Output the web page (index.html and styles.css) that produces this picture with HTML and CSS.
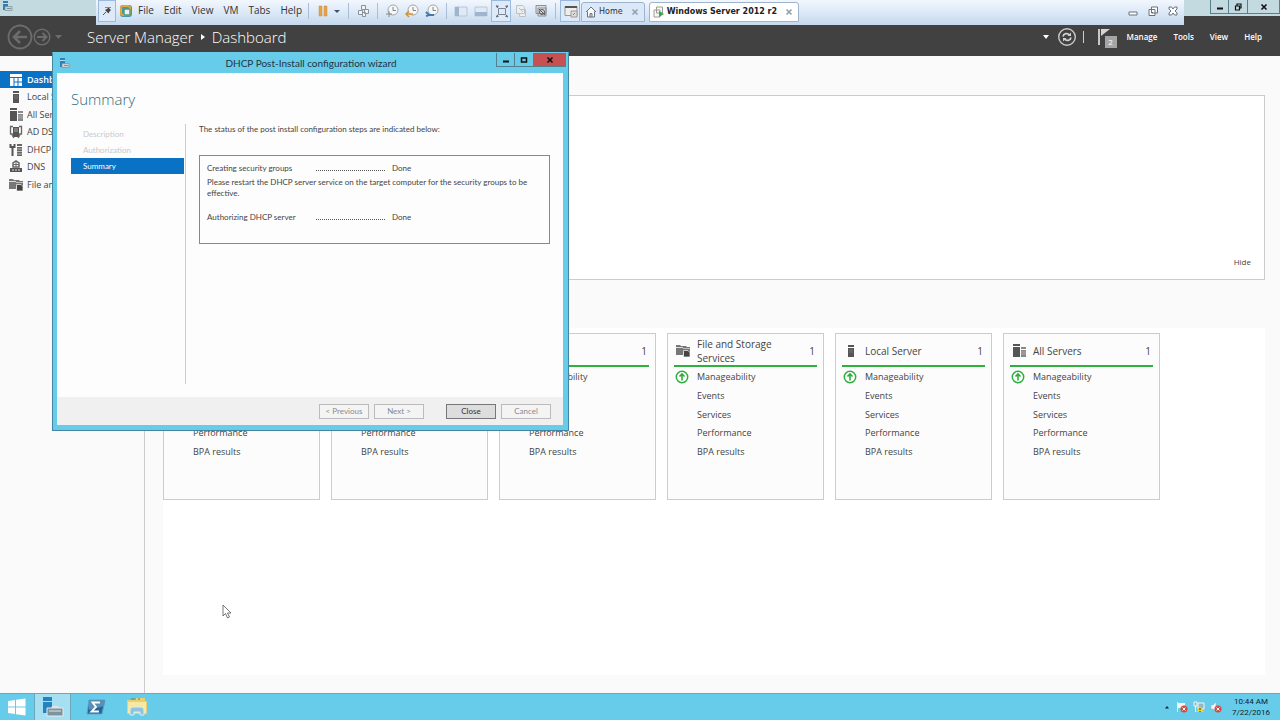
FILE: index.html
```html
<!DOCTYPE html>
<html lang="en">
<head>
<meta charset="utf-8">
<title>Server Manager</title>
<link rel="stylesheet" href="styles.css">
</head>
<body>
<svg class="defs" aria-hidden="true">
  <defs>
    <symbol id="server" viewBox="0 0 14 14"><path d="M4 1h6v2H4zM4 4h6v9H4z" fill="#555"/><path d="M5 6h4M5 8h4" stroke="#777"/></symbol>
    <symbol id="servers" viewBox="0 0 14 14"><path d="M1 0h7v2H1zM1 3h7v10H1z" fill="#555"/><path d="M9 3h5v2H9zM9 6h5v7H9z" fill="#888"/><path d="M9 8h5M9 10h5" stroke="#aaa"/></symbol>
    <symbol id="adds" viewBox="0 0 14 14"><path d="M4 2h6v10H4z" fill="#555"/><path d="M5 4h4M5 6h4" stroke="#aaa"/><path d="M4 1.500H1.500V9H4M10 1.500h2.500V9H10M3 10l2 3M11 10l-2 3" fill="none" stroke="#666" stroke-width="1.300"/></symbol>
    <symbol id="dhcp" viewBox="0 0 14 14"><path d="M3.500 4v9M1.500 1v3h4V1" fill="none" stroke="#555" stroke-width="2"/><path d="M8 1h5v2H8zM8 4h5v9H8z" fill="#666"/><path d="M8 6h5M8 8.500h5M8 11h5" stroke="#bbb"/></symbol>
    <symbol id="dns" viewBox="0 0 14 14"><path d="M4 7V3l3-2 3 2v4z" fill="none" stroke="#666" stroke-width="1.500"/><path d="M7 2v5M4 4.500h6" stroke="#666"/><path d="M1 8h12v4H1z" fill="#555"/><path d="M3 10h2M6 10h2M9 10h2" stroke="#ddd"/></symbol>
    <symbol id="files" viewBox="0 0 14 14"><path d="M0 1h4l1 1h2v9H0z" fill="#777"/><path d="M0 3.500h7" stroke="#ddd"/><path d="M7 2h3l1 1h3v5H7z" fill="#777"/><path d="M7 4.500h7" stroke="#ddd" stroke-width=".7"/><path d="M7.500 6.500H12l2 2V13H7.500z" fill="#444" stroke="#fafafa" stroke-width=".7"/></symbol>
    <symbol id="up" viewBox="0 0 14 14"><circle cx="7" cy="7" r="5.700" fill="#fff" stroke="#2dae3c" stroke-width="1.500"/><path d="M7 10.500V4M4.500 6.500L7 4l2.500 2.500" fill="none" stroke="#2dae3c" stroke-width="1.600"/></symbol>
    <symbol id="app" viewBox="0 0 12 12"><path d="M2 1h5v9H2z" fill="#2c80b8"/><path d="M2 3.500h5" stroke="#b9dcec"/><path d="M4 6.500h7v4H4z" fill="#c9d3d8" stroke="#7d8f98" stroke-width=".7"/><path d="M6 8.500h4" stroke="#7d8f98"/></symbol>
    <symbol id="min" viewBox="0 0 12 12"><path d="M3 7.500h6" stroke="currentColor" stroke-width="2"/></symbol>
    <symbol id="max" viewBox="0 0 12 12"><path d="M3.500 4h5v4h-5z" fill="none" stroke="currentColor" stroke-width="1.500"/></symbol>
    <symbol id="restore" viewBox="0 0 12 12"><path d="M3.500 5h4v4h-4zM5 5V3h4v4H8" fill="none" stroke="currentColor" stroke-width="1.200"/></symbol>
    <symbol id="x" viewBox="0 0 12 12"><path d="M3.500 3.500l5 5M8.500 3.500l-5 5" stroke="currentColor" stroke-width="1.600"/></symbol>
    <symbol id="clock" viewBox="0 0 20 20"><circle cx="11" cy="9" r="5" fill="#f7f7f5" stroke="#a4a7ac"/><path d="M11 6v3.500h3" fill="none" stroke="#7f858d"/></symbol>
  </defs>
</svg>

<div class="titlebar">
  <svg class="ic12"><use href="#app"/></svg>
  <div class="winctl">
    <button aria-label="Minimize"><svg class="ic12"><use href="#min"/></svg></button>
    <button aria-label="Restore"><svg class="ic12"><use href="#restore"/></svg></button>
    <button class="wide" aria-label="Close"><svg class="ic12"><use href="#x"/></svg></button>
  </div>
</div>

<header class="header">
  <div class="history">
    <button aria-label="Back"><svg width="26" height="26" viewBox="0 0 26 26"><circle cx="13" cy="13" r="11.500" fill="none" stroke="#6c6c6c" stroke-width="1.800"/><path d="M20 13H8M13 7l-6 6 6 6" fill="none" stroke="#6c6c6c" stroke-width="2.600"/></svg></button>
    <button aria-label="Forward"><svg width="18" height="18" viewBox="0 0 18 18"><circle cx="9" cy="9" r="7.800" fill="none" stroke="#6c6c6c" stroke-width="1.500"/><path d="M4 9h9M9.500 5l4 4-4 4" fill="none" stroke="#6c6c6c" stroke-width="2"/></svg></button>
    <svg width="14" height="8" viewBox="0 0 14 8"><path d="M4 2h7L7.500 6z" fill="#6c6c6c"/></svg>
  </div>
  <h1 class="crumbs"><span>Server Manager</span><svg width="6" height="8" viewBox="0 0 6 8"><path d="M1 1l4 3-4 3z" fill="#fff"/></svg><span>Dashboard</span></h1>
  <nav class="actions">
    <svg width="6" height="6" viewBox="0 0 6 6"><path d="M0 1h6L3 5z" fill="#fff"/></svg>
    <button aria-label="Refresh"><svg width="20" height="20" viewBox="0 0 20 20"><circle cx="10" cy="10" r="8.300" fill="none" stroke="#c8c8c8" stroke-width="1.400"/><path d="M6 9.500c.5-3 4.500-4 6.500-1.500M14 10.500c-.5 3-4.500 4-6.500 1.500" fill="none" stroke="#d0d0d0" stroke-width="1.700"/><path d="M14 5.500V9h-3.500zM6 14.500V11h3.500z" fill="#d0d0d0"/></svg></button>
    <span class="bar"></span>
    <button class="flag" aria-label="Notifications"><svg width="14" height="18" viewBox="0 0 14 18"><path d="M2 1v16" stroke="#c8c8c8" stroke-width="2"/><path d="M4 1h9L4 8z" fill="#d4d4d4"/></svg><span class="badge">2</span></button>
    <button class="menu">Manage</button><button class="menu">Tools</button><button class="menu">View</button><button class="menu">Help</button>
  </nav>
</header>

<div class="main">
  <nav class="sidebar">
    <div class="links">
      <a class="on" href="#"><svg class="ic14" viewBox="0 0 14 14"><path d="M1 1h12v12H1z" fill="#fff"/><path d="M1 4.500h12M5 5v8M9 5v8M5 9h8" stroke="#0a72c4"/></svg>Dashboard</a>
      <a href="#"><svg class="ic14"><use href="#server"/></svg>Local Server</a>
      <a href="#"><svg class="ic14"><use href="#servers"/></svg>All Servers</a>
      <a href="#"><svg class="ic14"><use href="#adds"/></svg>AD DS</a>
      <a href="#"><svg class="ic14"><use href="#dhcp"/></svg>DHCP</a>
      <a href="#"><svg class="ic14"><use href="#dns"/></svg>DNS</a>
      <a href="#"><svg class="ic14"><use href="#files"/></svg>File and Storage Services</a>
    </div>
  </nav>
  <main class="content">
    <section class="welcome"><button>Hide</button></section>
    <section class="groups">
      <article class="tile"><header><svg class="ic14"><use href="#adds"/></svg><h2>AD DS</h2><b>1</b></header><ul><li class="ok"><svg class="ic14"><use href="#up"/></svg>Manageability</li><li>Events</li><li>Services</li><li>Performance</li><li>BPA results</li></ul></article>
      <article class="tile"><header><svg class="ic14"><use href="#dhcp"/></svg><h2>DHCP</h2><b>1</b></header><ul><li class="ok"><svg class="ic14"><use href="#up"/></svg>Manageability</li><li>Events</li><li>Services</li><li>Performance</li><li>BPA results</li></ul></article>
      <article class="tile"><header><svg class="ic14"><use href="#dns"/></svg><h2>DNS</h2><b>1</b></header><ul><li class="ok"><svg class="ic14"><use href="#up"/></svg>Manageability</li><li>Events</li><li>Services</li><li>Performance</li><li>BPA results</li></ul></article>
      <article class="tile"><header><svg class="ic14"><use href="#files"/></svg><h2>File and Storage Services</h2><b>1</b></header><ul><li class="ok"><svg class="ic14"><use href="#up"/></svg>Manageability</li><li>Events</li><li>Services</li><li>Performance</li><li>BPA results</li></ul></article>
      <article class="tile"><header><svg class="ic14"><use href="#server"/></svg><h2>Local Server</h2><b>1</b></header><ul><li class="ok"><svg class="ic14"><use href="#up"/></svg>Manageability</li><li>Events</li><li>Services</li><li>Performance</li><li>BPA results</li></ul></article>
      <article class="tile"><header><svg class="ic14"><use href="#servers"/></svg><h2>All Servers</h2><b>1</b></header><ul><li class="ok"><svg class="ic14"><use href="#up"/></svg>Manageability</li><li>Events</li><li>Services</li><li>Performance</li><li>BPA results</li></ul></article>
    </section>
  </main>
</div>

<footer class="taskbar">
  <button class="start" aria-label="Start"><svg width="18" height="18" viewBox="0 0 18 18"><path d="M0 3l7-1v6.500H0zM8 1.800L17.500.5v8H8zM0 9.500h7V16l-7-1zM8 9.500h9.500v8L8 16.200z" fill="#fff"/></svg></button>
  <button class="running" aria-label="Server Manager"><svg width="22" height="22" viewBox="0 0 22 22"><path d="M1 1h9v16H1z" fill="#2482bd"/><path d="M1 5.500h9" stroke="#a9dcf0"/><path d="M5 12h16v8H5z" fill="#7e929c" stroke="#e3eef2"/><path d="M10 12v-1.500h6V12M7 15h12" fill="none" stroke="#dde7eb"/></svg></button>
  <button aria-label="PowerShell"><svg width="20" height="18" viewBox="0 0 20 18"><path d="M3 2h16l-3 14H1z" fill="#24659b" stroke="#5fa5cc"/><path d="M3 2h16l-1 6-15 4z" fill="#5890b8"/><path d="M13 5.500V4.500H6.500L10 9l-4.500 4.500H12v-1" fill="none" stroke="#fff" stroke-width="1.800"/></svg></button>
  <button aria-label="File Explorer"><svg width="22" height="20" viewBox="0 0 22 20"><path d="M1 3h7l1-2h10v3h2v13H1z" fill="#e9cf72"/><path d="M2 5h18v11H2z" fill="#f8e9a2"/><path d="M5 2h5M12 2h2" stroke="#4f8b63"/><path d="M4 18v-5c0-2 2-3 4-3h6c2 0 4 1 4 3v5h-4v-3H8v3z" fill="#8fc4df" stroke="#d5edf5"/></svg></button>
  <div class="tray">
    <svg width="8" height="6" viewBox="0 0 8 6"><path d="M2 4.500h4L4 2z" fill="#123"/></svg>
    <svg width="12" height="12" viewBox="0 0 12 12"><path d="M1.500 1v10" stroke="#eee"/><path d="M2 2h7v5H2z" fill="#f4f4f4"/><circle cx="8" cy="8" r="3.500" fill="#d24a3d"/><path d="M6.500 6.500l3 3M9.500 6.500l-3 3" stroke="#fff"/></svg>
    <svg width="12" height="12" viewBox="0 0 12 12"><path d="M1 1h3v4H1zM2.500 5v6M5 2h6v6H5z" fill="#91b9c3" stroke="#eef6f4"/><path d="M7 5l4 6H3z" fill="#f5cf2c"/><path d="M7 7v2M7 10v1" stroke="#333"/></svg>
    <svg width="12" height="12" viewBox="0 0 12 12"><path d="M1 4h2l3-3v9L3 8H1z" fill="#f3f3f3" stroke="#9ab" stroke-width=".5"/><circle cx="8" cy="8" r="3.500" fill="#d24a3d"/><path d="M6.500 6.500l3 3M9.500 6.500l-3 3" stroke="#fff"/></svg>
    <div class="time"><span>10:44 AM</span><span>7/22/2016</span></div>
  </div>
</footer>

<div class="vmbar">
  <button class="boxed pin" aria-label="Pin"><svg width="12" height="12" viewBox="0 0 12 12"><path d="M2 10l3-3" stroke="#555"/><path d="M4 5l3.500 3.500 1-2L10 5 7.500 2.500 6 4z" fill="#444"/><path d="M4 2.500h6" stroke="#888"/></svg></button>
  <svg class="logo" width="14" height="14" viewBox="0 0 14 14"><rect x="1" y="1" width="12" height="12" rx="3" fill="#4b95ae"/><rect x="2" y="2" width="9" height="9" rx="2" fill="none" stroke="#e8a33b" stroke-width="2"/><rect x="5" y="5" width="6" height="6" rx="1" fill="#eef" stroke="#4a9f75" stroke-width="1.500"/></svg>
  <div class="menus"><button>File</button><button>Edit</button><button>View</button><button>VM</button><button>Tabs</button><button>Help</button></div>
  <i class="sep"></i>
  <button class="tool" aria-label="Suspend"><svg class="ic20" viewBox="0 0 20 20"><path d="M6 5h3v10H6zM11 5h3v10h-3z" fill="#e5a24a" stroke="#c98d42" stroke-width=".5"/></svg></button>
  <svg class="caret" viewBox="0 0 11 20"><path d="M1 9h6l-3 3z" fill="#3e5370"/></svg>
  <i class="sep"></i>
  <button class="tool" aria-label="Send keys"><svg class="ic20" viewBox="0 0 20 20"><path d="M8.500 4.500h4v4h-4zM5.500 9.500h4v4h-4zM11.500 8.500h4v4h-4zM9.500 11.500h3v4h-3z" fill="#f3f3f3" stroke="#8b929c"/></svg></button>
  <i class="sep"></i>
  <button class="tool" aria-label="Take snapshot"><svg class="ic20" viewBox="0 0 20 20"><use href="#clock"/><path d="M4 13h6M7 10v6" stroke="#888"/></svg></button>
  <button class="tool" aria-label="Revert snapshot"><svg class="ic20" viewBox="0 0 20 20"><use href="#clock"/><path d="M4 13h7M7 10l-3 3 3 3" fill="none" stroke="#d99431" stroke-width="1.500"/></svg></button>
  <button class="tool" aria-label="Manage snapshots"><svg class="ic20" viewBox="0 0 20 20"><use href="#clock"/><path d="M4 11l3 3h5M4 15l3-1" fill="none" stroke="#3f78ad" stroke-width="2"/></svg></button>
  <i class="sep"></i>
  <button class="tool" aria-label="Library"><svg class="ic20" viewBox="0 0 20 20"><path d="M4 6h12v9H4z" fill="#dfeaf6" stroke="#b6c7da"/><path d="M4 6h4v9H4z" fill="#9fb4cd"/></svg></button>
  <button class="tool" aria-label="Thumbnails"><svg class="ic20" viewBox="0 0 20 20"><path d="M4 6h12v9H4z" fill="#dfeaf6" stroke="#b6c7da"/><path d="M4 11h12v4H4z" fill="#9fb4cd"/></svg></button>
  <button class="tool boxed" aria-label="Full screen"><svg class="ic20" viewBox="0 0 20 20"><path d="M6.500 7.500h7v6h-7zM6 7L4 5M14 7l2-2M6 14l-2 2M14 14l2 2" fill="none" stroke="#7b8490"/><path d="M4 4l3 1-2 2zM16 4l-3 1 2 2zM4 16.500l3-1-2-2zM16 16.500l-3-1 2-2z" fill="#616b78"/></svg></button>
  <button class="tool" aria-label="Unity"><svg class="ic20" viewBox="0 0 20 20"><path d="M5.500 4.500h6l2 2v6h-8zM9.500 8.500h5v7h-6v-3" fill="#eee" stroke="#bcc2ca"/><path d="M8 7l4 4" stroke="#bcc2ca"/></svg></button>
  <button class="tool" aria-label="Cycle monitors"><svg class="ic20" viewBox="0 0 20 20"><path d="M5 4.500h10v8H5zM7 7h8v8H7z" fill="#ddd" stroke="#8a9099"/><circle cx="11" cy="11" r="2.500" fill="none" stroke="#555"/><path d="M8 8l6 6" stroke="#555"/></svg></button>
  <i class="sep"></i>
  <button class="tool boxed" aria-label="Console view"><svg class="ic20" viewBox="0 0 20 20"><path d="M4 5.500h12v9H4z" fill="#eee" stroke="#999"/><path d="M4 6h12" stroke="#555" stroke-width="2"/><path d="M10 10h6v6h-6z" fill="#ddd" stroke="#a6968a"/><path d="M12 14l2-2" stroke="#b66"/></svg></button>
  <div class="tabs">
    <button class="tab"><svg class="ic12" viewBox="0 0 12 12"><path d="M1 6l5-5 5 5M2.500 5.500V11h7V5.500M5 11V7.500h2V11" fill="#fff" stroke="#68717c"/></svg><span>Home</span><svg class="ic12 shut"><use href="#x"/></svg></button>
    <button class="tab active"><svg class="ic12" viewBox="0 0 12 12"><path d="M3.500 1h6v6h-6zM1 4h6v7H1z" fill="#f8f8f8" stroke="#9a9f94"/><path d="M6 5l5 3-5 3z" fill="#3ba648"/></svg><span>Windows Server 2012 r2</span><svg class="ic12 shut"><use href="#x"/></svg></button>
  </div>
  <div class="vmctl">
    <button aria-label="Minimize"><svg class="ic12" viewBox="0 0 12 12"><path d="M2 7h8v3H2z" fill="#fff" stroke="#68737f"/></svg></button>
    <button aria-label="Restore"><svg class="ic12" viewBox="0 0 12 12"><path d="M4.500 2h6v6h-6zM2 4.500h6v6H2zM4 7.500h2" fill="#fff" stroke="#68737f"/></svg></button>
    <button aria-label="Close"><svg class="ic12" viewBox="0 0 12 12"><path d="M2 2h2.500L6 4l1.500-2H10v2L8 6l2 2v2H7.500L6 8l-1.500 2H2V8l2-2-2-2z" fill="#fff" stroke="#68737f"/></svg></button>
  </div>
</div>

<section class="wizard" role="dialog" aria-labelledby="wiz-title">
  <div class="wiz-title">
    <svg class="ic12"><use href="#app"/></svg>
    <h2 id="wiz-title">DHCP Post-Install configuration wizard</h2>
    <div class="winctl">
      <button aria-label="Minimize"><svg class="ic12"><use href="#min"/></svg></button>
      <button aria-label="Maximize"><svg class="ic12"><use href="#max"/></svg></button>
      <button class="wide red" aria-label="Close"><svg class="ic12"><use href="#x"/></svg></button>
    </div>
  </div>
  <div class="wiz-body">
    <h3>Summary</h3>
    <div class="wiz-cols">
      <ol class="steps"><li>Description</li><li>Authorization</li><li class="on">Summary</li></ol>
      <div class="status">
        <p>The status of the post install configuration steps are indicated below:</p>
        <div class="results">
          <div class="line"><span>Creating security groups</span><i></i><span>Done</span></div>
          <p>Please restart the DHCP server service on the target computer for the security groups to be effective.</p>
          <div class="line"><span>Authorizing DHCP server</span><i></i><span>Done</span></div>
        </div>
      </div>
    </div>
  </div>
  <div class="wiz-foot">
    <button disabled>&lt; Previous</button><button disabled>Next &gt;</button><button class="go">Close</button><button disabled>Cancel</button>
  </div>
</section>

<svg class="cursor" width="10" height="15" viewBox="0 0 10 15"><path d="M1 1v11l2.500-2.500L5.500 14l2-1-2-4H9z" fill="#fff" stroke="#555" stroke-width=".8"/></svg>
</body>
</html>
```

FILE: styles.css
```css
* { box-sizing: border-box; }
body {
  margin: 0;
  min-height: 100vh;
  display: flex;
  flex-direction: column;
  position: relative;
  font: 9px/12px "Open Sans", "Noto Sans", sans-serif;
  color: #444;
  background: #fafafa;
}
button { font: inherit; color: inherit; background: none; border: 0; padding: 0; margin: 0; white-space: nowrap; }
h1, h2, h3, p, ul, ol { margin: 0; padding: 0; font-weight: 400; list-style: none; }
a { color: inherit; text-decoration: none; }
svg { display: block; flex: none; }
.defs { position: absolute; width: 0; height: 0; }
.ic12 { width: 12px; height: 12px; }
.ic14 { width: 14px; height: 14px; }
.ic20 { width: 20px; height: 20px; }

/* application window */
.titlebar { height: 16px; display: flex; justify-content: space-between; padding-left: 1px; background: #c2dae0; color: #111; }
.winctl { display: flex; height: 14px; }
.winctl button { width: 19px; display: grid; place-items: center; border: 1px solid #55808c; border-top: 0; border-left: 0; }
.winctl button:first-child { border-left: 1px solid #55808c; }
.winctl .wide { width: 32px; }
.winctl .red { background: #c75050; }

.header { height: 40px; display: flex; align-items: center; padding-top: 2px; background: #414141; color: #fff; }
.history { display: flex; align-items: center; width: 87px; padding-left: 7px; }
.crumbs { display: flex; align-items: center; gap: 6px; font-size: 15px; line-height: 20px; font-weight: 300; }
.actions { margin-left: auto; display: flex; align-items: center; padding-right: 18px; font-size: 8px; font-weight: 600; }
.actions > svg { margin-right: 8px; }
.bar { width: 1px; height: 12px; margin: 0 13px 0 6px; background: #ccc; }
.flag { position: relative; width: 20px; height: 22px; margin-right: 10px; }
.badge { position: absolute; right: 0; bottom: 0; width: 12px; height: 12px; background: #a5a5a5; color: #fff; font-weight: 400; }
.menu + .menu { margin-left: 16px; }

.main { flex: 1; display: flex; }
.sidebar { width: 145px; padding-top: 15px; border-right: 1px solid #ccc; font-size: 9px; }
.links { display: flex; flex-direction: column; justify-content: space-between; height: 122px; }
.links a { display: flex; align-items: center; gap: 4px; height: 17px; padding-left: 9px; }
.links a.on { background: #0a72c4; color: #fff; font-weight: 600; }
.content { flex: 1; display: flex; flex-direction: column; gap: 48px; padding: 39px 15px 18px 18px; }
.welcome { height: 185px; border: 1px solid #ccc; background: #fff; display: flex; align-items: flex-end; justify-content: flex-end; padding: 11px 13px; font-size: 8px; }
.groups { flex: 1; display: grid; grid-template-columns: repeat(auto-fill, 157px); align-content: start; gap: 11px; padding-top: 5px; background: #fff; }
.tile { height: 167px; padding: 0 6px; border: 1px solid #ccc; background: #fcfcfc; }
.tile header { height: 33px; display: flex; align-items: center; padding: 2px 2px 0 2px; border-bottom: 2px solid #2fb13b; }
.tile h2 { flex: 1; margin-left: 7px; font-size: 10px; line-height: 14px; }
.tile b { font-weight: 400; font-size: 10px; }
.tile ul { display: flex; flex-direction: column; justify-content: space-between; height: 94px; padding-top: 1px; }
.tile li { display: flex; align-items: center; height: 18px; padding-left: 23px; }
.tile .ok { padding-left: 1px; gap: 8px; }

.taskbar { height: 27px; display: flex; align-items: stretch; background: #66cce9; border-top: 1px solid #75a5b4; color: #123; font-size: 8px; line-height: 11px; }
.taskbar button { width: 41px; display: grid; place-items: center; }
.taskbar .start { width: 34px; }
.taskbar .running { width: 37px; margin-right: 4px; background: #a6dff2; border: 1px solid #6ba8bd; border-width: 0 1px; }
.tray { margin-left: auto; display: flex; align-items: center; gap: 5px; padding-right: 10px; }
.time { display: flex; flex-direction: column; align-items: center; margin-left: 5px; font-family: Roboto, "Open Sans", sans-serif; }

/* virtual machine toolbar */
.vmbar {
  position: absolute; top: 0; left: 96px; right: 96px; height: 25px;
  display: flex; align-items: center; padding: 0 0 3px 2px;
  background: linear-gradient(#f2f7fd, #dce9f7 50%, #c5d8ee);
  color: #333;
}
.boxed { border: 1px solid #9bb9dd; background: #dceafa; }
.pin { width: 18px; height: 22px; display: grid; place-items: center; }
.logo { margin: 0 5px 0 3px; }
.menus { display: flex; gap: 10px; font-size: 10px; line-height: 14px; }
.menus button { padding-bottom: 2px; }
.sep { width: 1px; height: 16px; margin: 0 4px; background: #a9bdd3; }
.menus + .sep { margin-left: 6px; }
.tool { width: 20px; height: 22px; display: grid; place-items: center; }
.caret { width: 11px; height: 20px; }
.tabs { align-self: flex-end; display: flex; gap: 4px; padding-left: 1px; font: 8px/12px "DejaVu Sans", sans-serif; }
.tab { display: flex; align-items: center; gap: 2px; height: 20px; padding: 0 3px; border: 1px solid #9eb4ce; border-radius: 3px 3px 0 0; background: #dbe8f7; }
.tab .shut { margin-left: 4px; color: #8fa0b3; }
.tab.active { background: #fff; font-weight: 700; color: #222; }
.vmctl { margin-left: auto; display: flex; gap: 8px; padding-right: 5px; }

/* wizard window */
.wizard { position: absolute; left: 52px; top: 52px; width: 517px; height: 379px; display: flex; flex-direction: column; padding: 0 5px 5px 4px; background: #66cce9; border: 1px solid #4585a0; border-top-color: #66cce9; font-family: Lato, "Open Sans", sans-serif; }
.wiz-title { height: 20px; display: flex; align-items: center; justify-content: space-between; padding-left: 1px; color: #234; }
.wiz-title h2 { flex: 1; text-align: center; font-size: 10px; padding-left: 56px; }
.wiz-title .winctl { align-self: flex-start; margin-right: -3px; color: #111; }
.wiz-body { flex: 1; display: flex; flex-direction: column; padding: 16px 13px 13px 14px; background: #fdfdfd; font-size: 8px; line-height: 11px; }
.wiz-body h3 { font: 300 15px/20px "Open Sans", sans-serif; color: #2f6b74; }
.wiz-cols { flex: 1; display: flex; margin-top: 15px; }
.steps { width: 115px; padding-top: 2px; border-right: 1px solid #ccc; color: #c9c9c9; }
.steps li { height: 16px; line-height: 16px; padding-left: 12px; margin-right: 1px; }
.steps .on { background: #0a72c4; color: #fff; }
.status { flex: 1; padding-left: 13px; }
.results { margin-top: 20px; height: 89px; border: 1px solid #888; padding: 7px; }
.line { display: grid; grid-template-columns: 109px 69px 1fr; }
.line i { height: 8px; border-bottom: 1px dotted #555; }
.line span:last-child { padding-left: 7px; }
.results p { margin: 3px 0 13px; }
.wiz-foot { height: 28px; display: flex; align-items: center; justify-content: flex-end; gap: 5px; padding-right: 12px; background: #f0f0f0; font-size: 8px; line-height: 11px; }
.wiz-foot button { width: 50px; height: 15px; border: 1px solid #bbb; color: #8a8a8a; background: #f4f4f4; }
.wiz-foot .go { margin-left: 17px; background: #ddd; border-color: #777; color: #333; }

.cursor { position: absolute; left: 222px; top: 604px; }
```
